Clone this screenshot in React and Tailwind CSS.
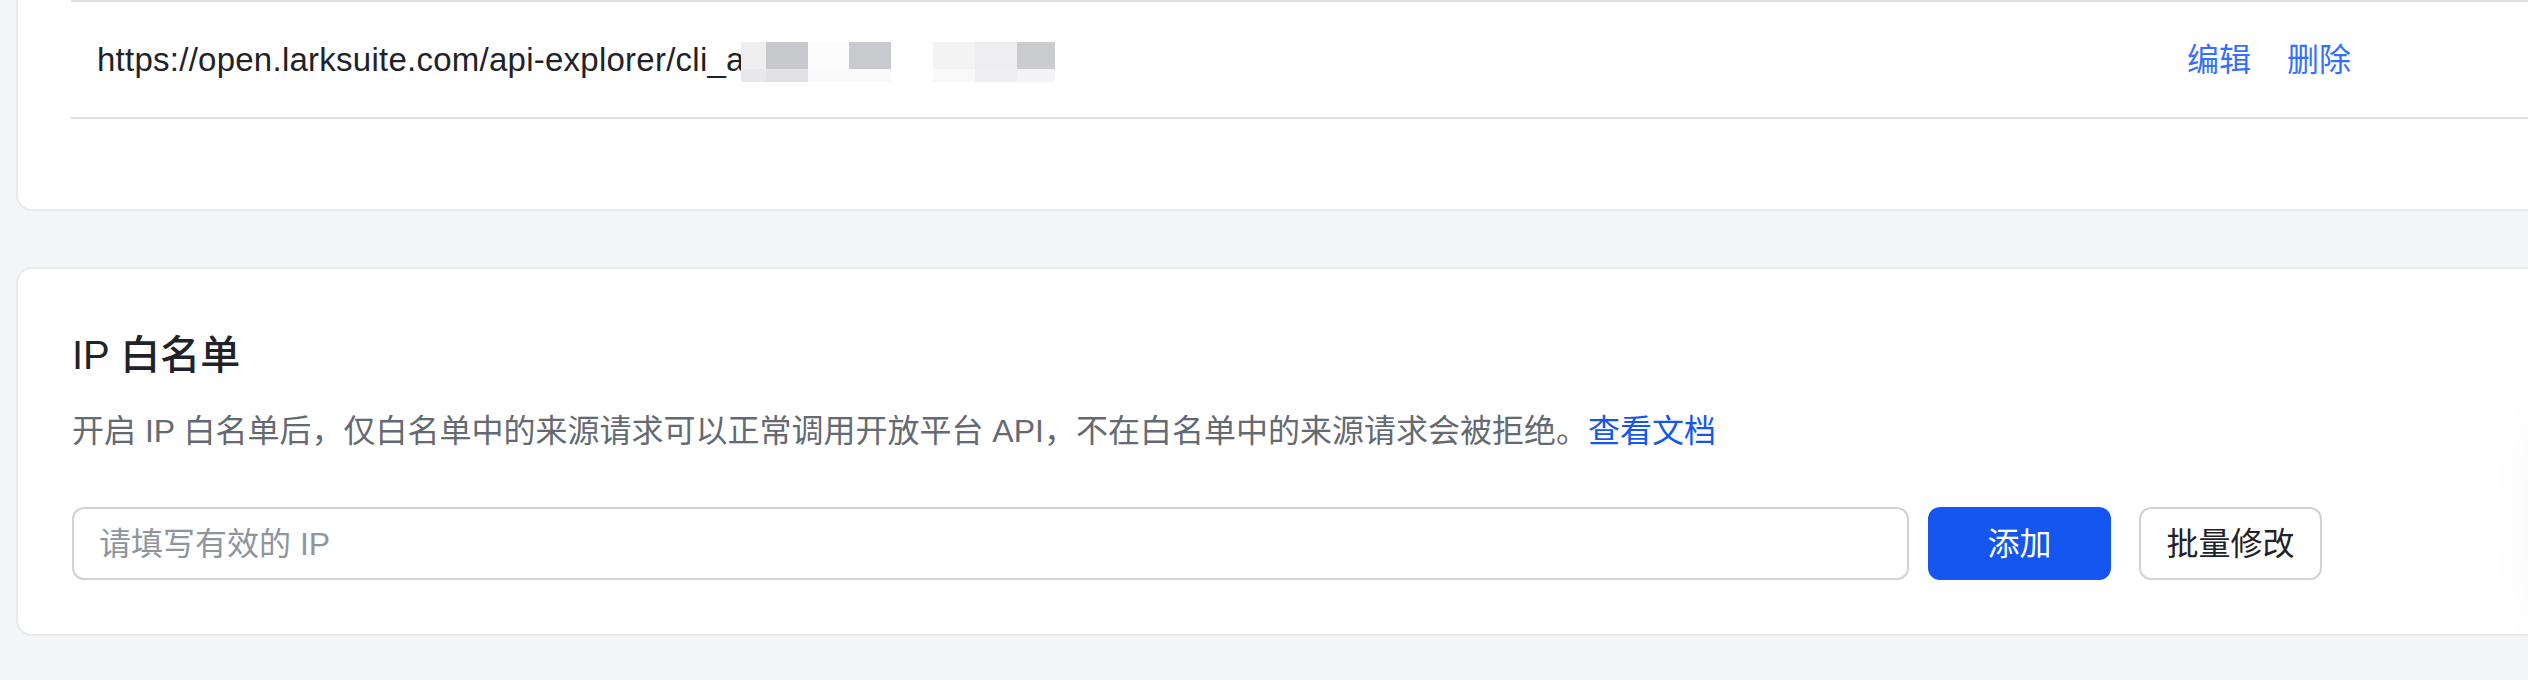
import React from "react";

const font = { fontFamily: '"Liberation Sans", "Noto Sans CJK SC", sans-serif' };

function Mosaic() {
  return (
    <div className="relative -ml-[4px] mt-[4px] flex flex-col">
      <div className="flex h-[27px]">
        <div className="w-[25px] bg-[#efeff0]" />
        <div className="w-[42px] bg-[#c8c9cc]" />
        <div className="w-[41px] bg-[#fcfcfc]" />
        <div className="w-[42px] bg-[#c9cacd]" />
        <div className="w-[42px] bg-white" />
        <div className="w-[42px] bg-[#f3f3f4]" />
        <div className="w-[42px] bg-[#eeeef0]" />
        <div className="w-[38px] bg-[#cbccce]" />
      </div>
      <div className="flex h-[13px]">
        <div className="w-[25px] bg-[#e8e8ea]" />
        <div className="w-[42px] bg-[#e2e2e4]" />
        <div className="w-[41px] bg-[#fafafa]" />
        <div className="w-[42px] bg-[#fafafa]" />
        <div className="w-[42px] bg-white" />
        <div className="w-[42px] bg-[#f9f9f9]" />
        <div className="w-[42px] bg-[#efeff1]" />
        <div className="w-[38px] bg-[#f3f3f5]" />
      </div>
    </div>
  );
}

export default function App() {
  return (
    <div
      className="relative h-[680px] w-full overflow-hidden bg-[#f4f5f7]"
      style={font}
    >
      <div className="pl-[16px]">
        {/* Card 1: callback URL list */}
        <div className="-mt-[60px] w-[2600px] rounded-[16px] border-2 border-[#e9eaec] bg-white pl-[53px] pt-[58px] pb-[90px]">
          <div className="flex h-[119px] items-center border-y-2 border-[#dee0e3] pl-[26px]">
            <div className="flex w-[2090px] shrink-0 items-center">
              <span className="text-[33px] leading-[40px] tracking-[0.25px] text-[#1f2329]">
                https://open.larksuite.com/api-explorer/cli_a
              </span>
              <Mosaic />
            </div>
            <div className="flex gap-[36px] text-[32px] leading-[40px] text-[#3370ff]">
              <span>编辑</span>
              <span>删除</span>
            </div>
          </div>
        </div>

        {/* Card 2: IP whitelist */}
        <div className="mt-[56px] w-[2600px] rounded-[16px] border-2 border-[#e9eaec] bg-white pl-[54px] pt-[58px] pb-[54px]">
          <h2 className="text-[40px] font-medium leading-[56px] text-[#1f2329]">
            IP 白名单
          </h2>
          <p className="mt-[24px] text-[32px] leading-[48px] text-[#646a73]">
            开启 IP 白名单后，仅白名单中的来源请求可以正常调用开放平台 API，不在白名单中的来源请求会被拒绝。
            <span className="text-[#1456f0]">查看文档</span>
          </p>
          <div className="mt-[52px] flex items-center">
            <div className="flex h-[73px] w-[1837px] items-center rounded-[12px] border-2 border-[#d0d3d6] bg-white pl-[25px]">
              <span className="text-[32px] leading-[40px] text-[#8f959e]">
                请填写有效的 IP
              </span>
            </div>
            <button className="ml-[19px] flex h-[73px] w-[183px] items-center justify-center rounded-[12px] bg-[#1456f0] text-[32px] font-normal leading-[40px] text-white">
              添加
            </button>
            <button className="ml-[28px] flex h-[73px] w-[183px] items-center justify-center rounded-[12px] border-2 border-[#d0d3d6] bg-white text-[32px] font-normal leading-[40px] text-[#1f2329]">
              批量修改
            </button>
          </div>
        </div>
      </div>

      {/* faint shadow of an off-screen floating element */}
      <div className="absolute left-[2540px] top-[400px] h-[240px] w-[120px] rounded-full bg-white shadow-[0_0_60px_rgba(0,0,0,0.05)]" />
    </div>
  );
}
